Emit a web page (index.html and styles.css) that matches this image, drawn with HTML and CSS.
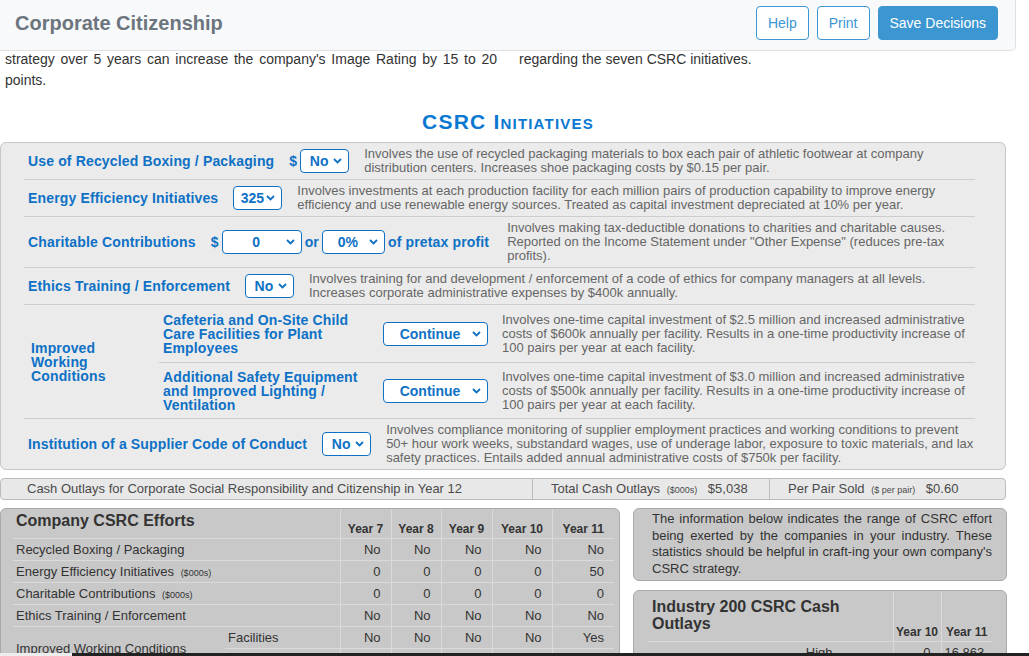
FILE: index.html
```html
<!DOCTYPE html>
<html>
  <head>
    <meta charset="utf-8" />
    <title>Corporate Citizenship</title>
    <link rel="stylesheet" href="styles.css">
  </head>
  <body>
    <div class="topbar">
      <h1 class="page-title">Corporate Citizenship</h1>
      <div class="actions">
        <button class="btn btn-outline">Help</button>
        <button class="btn btn-outline">Print</button>
        <button class="btn btn-primary">Save Decisions</button>
      </div>
    </div>

    <div class="content">
      <div class="intro">
        <p class="intro-left">strategy over 5 years can increase the company's Image Rating by 15 to 20 points.</p>
        <p class="intro-right">regarding the seven CSRC initiatives.</p>
      </div>

      <h2 class="section-title">CSRC Initiatives</h2>

      <div class="initiatives">
        <div class="init-row">
          <span class="label">Use of Recycled Boxing / Packaging</span>
          <span class="controls tight">$
            <span class="pick w-no"><span class="val">No</span><svg class="chev" width="9" height="6" viewBox="0 0 9 6"><path d="M1 1l3.5 3.5L8 1"/></svg></span>
          </span>
          <p class="desc">Involves the use of recycled packaging materials to box each pair of athletic footwear at company<br>distribution centers. Increases shoe packaging costs by $0.15 per pair.</p>
        </div>

        <div class="init-row">
          <span class="label">Energy Efficiency Initiatives</span>
          <span class="pick w-no"><span class="val">325</span><svg class="chev" width="9" height="6" viewBox="0 0 9 6"><path d="M1 1l3.5 3.5L8 1"/></svg></span>
          <p class="desc">Involves investments at each production facility for each million pairs of production capability to improve energy<br>efficiency and use renewable energy sources. Treated as capital investment depreciated at 10% per year.</p>
        </div>

        <div class="init-row">
          <span class="label">Charitable Contributions</span>
          <span class="controls tight">
            <span class="dollar">$</span>
            <span class="pick w-amt"><span class="val">0</span><svg class="chev" width="9" height="6" viewBox="0 0 9 6"><path d="M1 1l3.5 3.5L8 1"/></svg></span>
            or
            <span class="pick w-pct"><span class="val">0%</span><svg class="chev" width="9" height="6" viewBox="0 0 9 6"><path d="M1 1l3.5 3.5L8 1"/></svg></span>
            of pretax profit
          </span>
          <p class="desc wide-gap">Involves making tax-deductible donations to charities and charitable causes.<br>Reported on the Income Statement under "Other Expense" (reduces pre-tax<br>profits).</p>
        </div>

        <div class="init-row">
          <span class="label">Ethics Training / Enforcement</span>
          <span class="pick w-no"><span class="val">No</span><svg class="chev" width="9" height="6" viewBox="0 0 9 6"><path d="M1 1l3.5 3.5L8 1"/></svg></span>
          <p class="desc">Involves training for and development / enforcement of a code of ethics for company managers at all levels.<br>Increases corporate administrative expenses by $400k annually.</p>
        </div>

        <div class="init-row iwc">
          <span class="label iwc-label">Improved Working Conditions</span>
          <div class="iwc-items">
            <div class="iwc-item">
              <span class="label sub-label">Cafeteria and On-Site Child Care Facilities for Plant Employees</span>
              <span class="pick w-wide"><span class="val">Continue</span><svg class="chev" width="9" height="6" viewBox="0 0 9 6"><path d="M1 1l3.5 3.5L8 1"/></svg></span>
              <p class="desc">Involves one-time capital investment of $2.5 million and increased administrative<br>costs of $600k annually per facility. Results in a one-time productivity increase of<br>100 pairs per year at each facility.</p>
            </div>
            <div class="iwc-item">
              <span class="label sub-label">Additional Safety Equipment and Improved Lighting / Ventilation</span>
              <span class="pick w-wide"><span class="val">Continue</span><svg class="chev" width="9" height="6" viewBox="0 0 9 6"><path d="M1 1l3.5 3.5L8 1"/></svg></span>
              <p class="desc">Involves one-time capital investment of $3.0 million and increased administrative<br>costs of $500k annually per facility. Results in a one-time productivity increase of<br>100 pairs per year at each facility.</p>
            </div>
          </div>
        </div>

        <div class="init-row">
          <span class="label">Institution of a Supplier Code of Conduct</span>
          <span class="pick w-no"><span class="val">No</span><svg class="chev" width="9" height="6" viewBox="0 0 9 6"><path d="M1 1l3.5 3.5L8 1"/></svg></span>
          <p class="desc">Involves compliance monitoring of supplier employment practices and working conditions to prevent<br>50+ hour work weeks, substandard wages, use of underage labor, exposure to toxic materials, and lax<br>safety practices. Entails added annual administrative costs of $750k per facility.</p>
        </div>
      </div>

      <div class="outlays">
        <div class="outlay-cell outlay-title">Cash Outlays for Corporate Social Responsibility and Citizenship in Year 12</div>
        <div class="outlay-cell outlay-total">Total Cash Outlays <small>($000s)</small> <span class="amount">$5,038</span></div>
        <div class="outlay-cell">Per Pair Sold <small>($ per pair)</small> <span class="amount">$0.60</span></div>
      </div>

      <div class="lower">
        <div class="panel efforts">
          <table class="grid">
            <colgroup>
              <col class="c-label"><col class="c-sub">
              <col class="c-y7"><col class="c-y8"><col class="c-y9"><col class="c-y10"><col class="c-y11">
            </colgroup>
            <thead>
              <tr>
                <th class="grid-title" colspan="2">Company CSRC Efforts</th>
                <th class="yr">Year 7</th>
                <th class="yr">Year 8</th>
                <th class="yr">Year 9</th>
                <th class="yr">Year 10</th>
                <th class="yr">Year 11</th>
              </tr>
            </thead>
            <tbody>
              <tr>
                <td colspan="2">Recycled Boxing / Packaging</td>
                <td class="num">No</td><td class="num">No</td><td class="num">No</td><td class="num">No</td><td class="num">No</td>
              </tr>
              <tr>
                <td colspan="2">Energy Efficiency Initiatives <small>($000s)</small></td>
                <td class="num">0</td><td class="num">0</td><td class="num">0</td><td class="num">0</td><td class="num">50</td>
              </tr>
              <tr>
                <td colspan="2">Charitable Contributions <small>($000s)</small></td>
                <td class="num">0</td><td class="num">0</td><td class="num">0</td><td class="num">0</td><td class="num">0</td>
              </tr>
              <tr>
                <td colspan="2">Ethics Training / Enforcement</td>
                <td class="num">No</td><td class="num">No</td><td class="num">No</td><td class="num">No</td><td class="num">No</td>
              </tr>
              <tr>
                <td rowspan="2" class="group">Improved Working Conditions</td>
                <td>Facilities</td>
                <td class="num">No</td><td class="num">No</td><td class="num">No</td><td class="num">No</td><td class="num">Yes</td>
              </tr>
              <tr>
                <td>Safety/Lighting</td>
                <td class="num">No</td><td class="num">No</td><td class="num">No</td><td class="num">No</td><td class="num">No</td>
              </tr>
              <tr>
                <td colspan="2">Supplier Code of Conduct</td>
                <td class="num">No</td><td class="num">No</td><td class="num">No</td><td class="num">No</td><td class="num">No</td>
              </tr>
            </tbody>
          </table>
        </div>

        <div class="side">
          <div class="panel note">The information below indicates the range of CSRC effort being exerted by the companies in your industry. These statistics should be helpful in craft-ing your own company's CSRC strategy.</div>

          <div class="panel industry">
            <table class="grid">
              <colgroup>
                <col class="c-ind"><col class="c-i10"><col class="c-i11">
              </colgroup>
              <thead>
                <tr>
                  <th class="grid-title ind-title">Industry 200 CSRC Cash Outlays</th>
                  <th class="yr">Year 10</th>
                  <th class="yr">Year 11</th>
                </tr>
              </thead>
              <tbody>
                <tr><td class="ind-label">High</td><td class="num">0</td><td class="num">16,863</td></tr>
                <tr><td class="ind-label">Low</td><td class="num">0</td><td class="num">0</td></tr>
                <tr><td class="ind-label">Average</td><td class="num">0</td><td class="num">5,211</td></tr>
              </tbody>
            </table>
          </div>
        </div>
      </div>
    </div>

    <div class="scrollbar"><div class="thumb"></div></div>
  </body>
</html>
```

FILE: styles.css
```css
body {
  margin: 0;
  font-family: "Liberation Sans", Arial, sans-serif;
  color: #333;
  background: #fff;
}

/* fixed page header */
.topbar {
  position: fixed;
  top: 0;
  left: 0;
  z-index: 2;
  width: 1016px;
  height: 51px;
  box-sizing: border-box;
  display: flex;
  align-items: center;
  justify-content: space-between;
  padding: 0 17px 4px 15px;
  background: #f8f9fa;
  border-bottom: 1px solid #dee2e6;
  border-right: 1px solid #dee2e6;
  border-bottom-right-radius: 5px;
}
.page-title {
  margin: 0;
  font-size: 20px;
  font-weight: bold;
  color: #6c757d;
}
.actions {
  display: flex;
  gap: 8px;
}
.btn {
  height: 34px;
  padding: 0 11px;
  font-family: inherit;
  font-size: 14px;
  border: 1px solid #3b96d1;
  border-radius: 4px;
}
.btn-outline {
  background: #fff;
  color: #3b96d1;
}
.btn-primary {
  background: #3b96d1;
  color: #fff;
}

.content {
  width: 1016px;
  padding-top: 49px;
}
.intro {
  display: flex;
  font-size: 14px;
  line-height: 21px;
}
.intro p {
  margin: 0;
}
.intro-left {
  width: 497px;
  box-sizing: border-box;
  padding-left: 5px;
  text-align: justify;
}
.intro .intro-right {
  margin-left: 22px;
}

.section-title {
  margin: 19px 0 8px;
  text-align: center;
  font-size: 21px;
  line-height: 24px;
  font-variant: small-caps;
  letter-spacing: 1.2px;
  color: #0878d0;
}

/* initiatives panel */
.initiatives {
  width: 1006px;
  box-sizing: border-box;
  padding: 0 30px 0 23px;
  background: #ebebeb;
  border: 1px solid #c6c6c6;
  border-radius: 6px;
}
.init-row {
  display: flex;
  align-items: center;
  gap: 15px;
  padding: 4px 0 4px 4px;
  border-top: 1px solid #cdcdcd;
}
.init-row:first-child {
  border-top: 0;
}
.label,
.controls {
  font-size: 14px;
  font-weight: bold;
  line-height: 14px;
  letter-spacing: 0.15px;
  color: #0e71c6;
  white-space: nowrap;
}
.controls {
  display: flex;
  align-items: center;
  gap: 4px;
}
.controls.tight {
  gap: 3px;
}
.desc {
  margin: 0;
  font-size: 13px;
  line-height: 14px;
  color: #666;
  white-space: nowrap;
}
.desc.wide-gap {
  margin-left: 3px;
}

/* dropdown boxes */
.pick {
  display: inline-flex;
  align-items: center;
  flex-shrink: 0;
  height: 24px;
  box-sizing: border-box;
  padding: 0 6px 0 4px;
  background: #fff;
  border: 1px solid #0e71c6;
  border-radius: 4px;
  font-size: 14px;
  font-weight: bold;
  color: #0e71c6;
}
.pick .val {
  flex: 1;
  text-align: center;
}
.chev {
  fill: none;
  stroke: #0e71c6;
  stroke-width: 1.8;
}
.w-no { width: 49px; }
.w-amt { width: 80px; }
.w-pct { width: 63px; }
.w-wide { width: 105px; }

.iwc {
  padding: 0 0 0 4px;
  gap: 0;
}
.iwc-label {
  width: 110px;
  padding-left: 3px;
  margin-right: 18px;
  flex-shrink: 0;
  white-space: normal;
}
.iwc-items {
  flex: 1;
}
.iwc-item {
  display: flex;
  align-items: center;
  padding: 8px 0 7px 4px;
}
.iwc-item + .iwc-item {
  border-top: 1px solid #cdcdcd;
  padding: 7px 0 6px 4px;
}
.sub-label {
  width: 208px;
  margin-right: 12px;
  flex-shrink: 0;
  white-space: normal;
}
.iwc-item .desc {
  margin-left: 14px;
}

/* cash outlay summary bar */
.outlays {
  display: flex;
  width: 1006px;
  height: 22px;
  box-sizing: border-box;
  margin-top: 8px;
  background: #e8e8e8;
  border: 1px solid #bcbcbc;
  border-radius: 4px;
  font-size: 13px;
  line-height: 20px;
  color: #4a4a4a;
}
.outlay-cell {
  padding-left: 18px;
  white-space: nowrap;
}
.outlay-title {
  width: 532px;
  box-sizing: border-box;
  padding-left: 26px;
  border-right: 1px solid #bcbcbc;
}
.outlay-total {
  width: 237px;
  box-sizing: border-box;
  border-right: 1px solid #bcbcbc;
}
.outlays small {
  font-size: 9px;
  line-height: 1;
  margin: 0 3px;
}
.amount {
  margin-left: 4px;
}

/* lower panels */
.lower {
  display: flex;
  align-items: flex-start;
  gap: 13px;
  margin-top: 8px;
}
.panel {
  box-sizing: border-box;
  background: #c8c8c8;
  border: 1px solid #a9a9a9;
  border-radius: 6px;
}
.efforts {
  width: 620px;
  padding: 0 5px 0 12px;
}
.side {
  width: 374px;
  display: flex;
  flex-direction: column;
  gap: 9px;
}
.note {
  padding: 2px 14px 2px 18px;
  font-size: 13px;
  line-height: 16.7px;
  text-align: justify;
}
.industry {
  padding: 0 14px;
}

.grid {
  width: 100%;
  table-layout: fixed;
  border-collapse: collapse;
  font-size: 13px;
  color: #333;
}
.grid th,
.grid td {
  padding: 3px 10px 3px 3px;
  line-height: 15px;
  border-bottom: 1px solid #dadada;
  white-space: nowrap;
}
.grid thead tr {
  height: 29px;
}
.grid small {
  font-size: 9px;
  line-height: 1;
  margin-left: 3px;
}
.grid .grid-title {
  text-align: left;
  vertical-align: top;
  padding-top: 2px;
  font-size: 16px;
  line-height: 19px;
}
.grid .yr {
  text-align: center;
  vertical-align: bottom;
  padding: 0 0 1px;
  font-size: 12px;
  border-left: 1px solid #dadada;
}
.num {
  text-align: right;
  border-left: 1px solid #dadada;
}
.group {
  vertical-align: middle;
}
.c-label { width: 212px; }
.c-sub { width: 115px; }
.c-y7 { width: 51px; }
.c-y8 { width: 50px; }
.c-y9 { width: 51px; }
.c-y10 { width: 60px; }
.c-y11 { width: 62px; }

.grid .ind-title {
  white-space: normal;
  padding: 7px 3px 9px 4px;
  line-height: 17px;
}
.grid .ind-label {
  text-align: right;
  padding-right: 60px;
}
.c-ind { width: 245px; }
.c-i10 { width: 48px; }
.c-i11 { width: 51px; }

/* bottom scroll strip */
.scrollbar {
  position: fixed;
  left: 0;
  right: 0;
  bottom: 0;
  height: 3px;
  background: #eee;
}
.thumb {
  height: 3px;
  margin-left: 72px;
  background: #222;
}
```
